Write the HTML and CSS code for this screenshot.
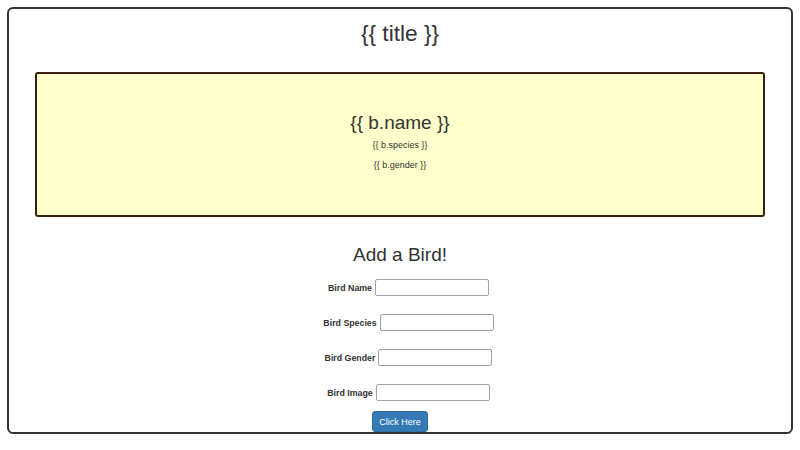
FILE: index.html
```html
<!DOCTYPE html>
<html>
<head>
<meta charset="utf-8">
<link rel="stylesheet" href="styles.css">
</head>
<body>
<div class="frame">
  <h1 class="title">{{ title }}</h1>
  <div class="card">
    <h2 class="bird-name">{{ b.name }}</h2>
    <p class="bird-info">{{ b.species }}</p>
    <p class="bird-info gap">{{ b.gender }}</p>
  </div>
  <h2 class="add-title">Add a Bird!</h2>
  <form class="form">
    <div class="row"><label>Bird Name</label><input type="text"></div>
    <div class="row"><label>Bird Species</label><input type="text"></div>
    <div class="row"><label>Bird Gender</label><input type="text"></div>
    <div class="row"><label>Bird Image</label><input type="text"></div>
    <button type="button" class="btn">Click Here</button>
  </form>
</div>
</body>
</html>
```
FILE: styles.css
```css
* { box-sizing: border-box; }
html, body { margin: 0; padding: 0; background: #fff; }
body {
  font-family: "Liberation Sans", Arial, sans-serif;
  color: #333;
  padding: 7px;
}
.frame {
  width: 786px;
  height: 427px;
  border: 2px solid #333;
  border-radius: 6px;
  display: flex;
  flex-direction: column;
  align-items: center;
  overflow: visible;
}
.title {
  margin: 12px 0 0;
  font-size: 22.7px;
  line-height: 25px;
  font-weight: 400;
  text-align: center;
}
.card {
  align-self: stretch;
  margin: 26px 26px 0;
  height: 145px;
  border: 2px solid #3a1f0e;
  border-radius: 3px;
  background: #ffffcc;
  display: flex;
  flex-direction: column;
  align-items: center;
  padding-top: 38px;
}
.bird-name {
  margin: 0;
  font-size: 19px;
  line-height: 21px;
  font-weight: 400;
}
.bird-info {
  margin: 6px 0 0;
  font-size: 9px;
  line-height: 13px;
}
.bird-info.gap { margin-top: 6.5px; }
.add-title {
  margin: 26.5px 0 0;
  font-size: 19px;
  line-height: 21px;
  font-weight: 400;
}
.form {
  display: flex;
  flex-direction: column;
  align-items: center;
  margin-top: 14.5px;
  gap: 18px;
}
.row {
  display: flex;
  align-items: center;
  gap: 3px;
  height: 17px;
  padding-left: 17px;
}
.row label {
  font-size: 8.8px;
  font-weight: 700;
}
.row input {
  width: 114px;
  height: 17px;
  border: 1px solid #a3a3a3;
  border-radius: 2px;
  background: #fff;
  padding: 0 4px;
  margin: 0;
}
.btn {
  margin-top: -8px;
  width: 56px;
  height: 21px;
  padding: 0;
  border: 1px solid #2e6da4;
  border-radius: 3px;
  background: #337ab7;
  color: #fff;
  font-family: "Liberation Sans", Arial, sans-serif;
  font-size: 9px;
}
```
